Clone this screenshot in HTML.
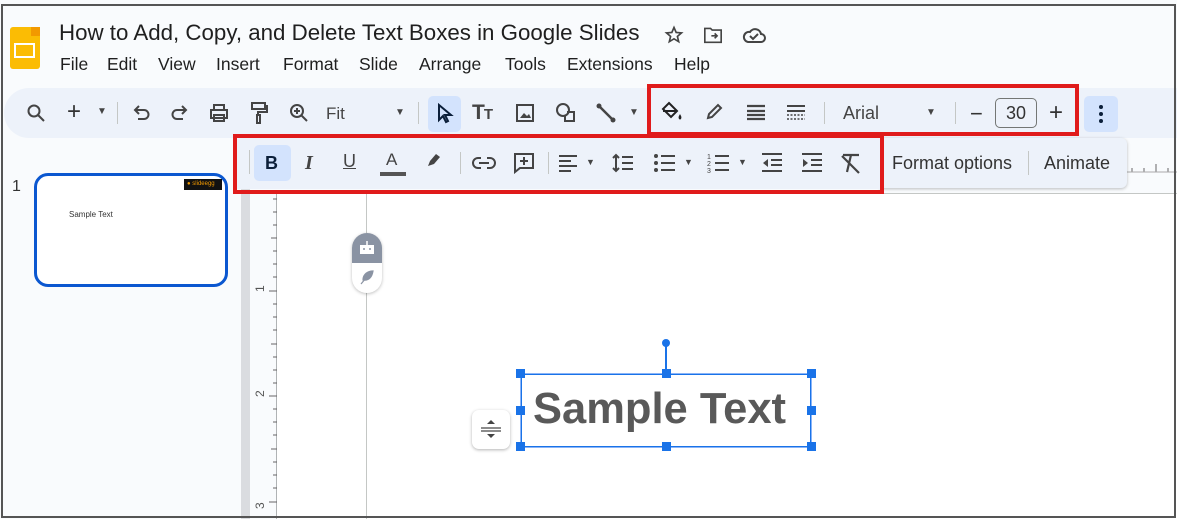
<!DOCTYPE html>
<html><head><meta charset="utf-8"><style>
*{box-sizing:border-box;margin:0;padding:0}
body{width:1177px;height:519px;overflow:hidden;background:#f9fbfd;font-family:"Liberation Sans",sans-serif;position:relative;color:#1f1f1f}
.abs{position:absolute}
.frame{position:absolute;left:1px;top:4px;width:1175px;height:514px;border:2px solid #555;z-index:50;pointer-events:none}
.menu span{position:absolute;top:0;white-space:nowrap}
.red{position:absolute;border:4px solid #e01b1b;z-index:20}
svg{position:absolute}
</style></head><body>
<div class="frame"></div>
<div class="abs" style="left:10px;top:27px;width:30px;height:42px;background:#fbbc04;border-radius:3px"></div>
<div class="abs" style="left:31px;top:27px;width:9px;height:9px;background:#f29900"></div>
<div class="abs" style="left:14px;top:43px;width:21px;height:15px;border:2px solid #fff"></div>
<div class="abs" style="left:59px;top:20px;font-size:22.3px;color:#1f1f1f;white-space:nowrap">How to Add, Copy, and Delete Text Boxes in Google Slides</div>
<svg style="left:664px;top:25px" width="20" height="20" viewBox="0 0 24 24"><path d="M12 3l2.6 6 6.4.5-4.9 4.2 1.5 6.3L12 16.6 6.4 20l1.5-6.3L3 9.5 9.4 9z" fill="none" stroke="#444" stroke-width="2"/></svg>
<svg style="left:703px;top:26px" width="20" height="18" viewBox="0 0 24 22"><path d="M2 3h7l2 2h11v15H2z M10 12h7 M14 9l3 3-3 3" fill="none" stroke="#444" stroke-width="2"/></svg>
<svg style="left:742px;top:25px" width="24" height="20" viewBox="0 0 24 20"><path d="M6 17h13a4 4 0 0 0 0-8 6 6 0 0 0-11-2 5 5 0 0 0-2 10z M8 11l3 3 5-5" fill="none" stroke="#444" stroke-width="2"/></svg>
<div class="abs menu" style="left:0;top:54px;font-size:17.5px"><span style="left:60px">File</span><span style="left:107px">Edit</span><span style="left:158px">View</span><span style="left:216px">Insert</span><span style="left:283px">Format</span><span style="left:359px">Slide</span><span style="left:419px">Arrange</span><span style="left:505px">Tools</span><span style="left:567px">Extensions</span><span style="left:674px">Help</span></div>

<div class="abs" style="left:4px;top:88px;width:1173px;height:50px;background:#edf2fa;border-radius:25px 0 0 25px"></div>
<svg style="left:26px;top:103px" width="20" height="20" viewBox="0 0 20 20"><circle cx="8" cy="8" r="5.5" fill="none" stroke="#444" stroke-width="2"/><path d="M12 12l6 6" stroke="#444" stroke-width="2"/></svg>
<div class="abs" style="left:67px;top:98px;font-size:24px;color:#333">+</div>
<div class="abs" style="left:97px;top:106px;font-size:10px;color:#444">▼</div>
<div class="abs" style="left:117px;top:102px;width:1px;height:22px;background:#c4c7c5"></div>
<svg style="left:131px;top:103px" width="20" height="20" viewBox="0 0 20 20"><path d="M5 7h8a4 4 0 0 1 0 9H7 M8 3L4 7l4 4" fill="none" stroke="#444" stroke-width="2"/></svg>
<svg style="left:170px;top:103px" width="20" height="20" viewBox="0 0 20 20"><path d="M15 7H7a4 4 0 0 0 0 9h6 M12 3l4 4-4 4" fill="none" stroke="#444" stroke-width="2"/></svg>
<svg style="left:208px;top:102px" width="22" height="22" viewBox="0 0 22 22"><path d="M6 3h10v5H6z M3 8h16v8H3z M6 13h10v6H6z" fill="#edf2fa" stroke="#444" stroke-width="2"/></svg>
<svg style="left:249px;top:101px" width="20" height="24" viewBox="0 0 20 24"><path d="M3 2h13v6H3z M16 5h2v6H9v3 M8 14h3v8H8z" fill="none" stroke="#444" stroke-width="2"/></svg>
<svg style="left:288px;top:102px" width="22" height="22" viewBox="0 0 22 22"><circle cx="9" cy="9" r="6" fill="none" stroke="#444" stroke-width="2"/><path d="M13 13l6 6 M6 9h6 M9 6v6" stroke="#444" stroke-width="2"/></svg>
<div class="abs" style="left:326px;top:104px;font-size:17px;color:#444">Fit</div>
<div class="abs" style="left:395px;top:107px;font-size:10px;color:#444">▼</div>
<div class="abs" style="left:418px;top:102px;width:1px;height:22px;background:#c4c7c5"></div>
<div class="abs" style="left:428px;top:96px;width:33px;height:36px;background:#d3e3fd;border-radius:5px"></div>
<svg style="left:436px;top:103px" width="18" height="22" viewBox="0 0 18 22"><path d="M3 2v15l4-4 3 6 2-1-3-6h6z" fill="none" stroke="#0b1f3a" stroke-width="2"/></svg>
<div class="abs" style="left:472px;top:101px;font-size:21px;font-weight:bold;color:#444;letter-spacing:-1px">T<span style="font-size:15px">T</span></div>
<svg style="left:515px;top:103px" width="20" height="20" viewBox="0 0 20 20"><rect x="2" y="2" width="16" height="16" fill="none" stroke="#444" stroke-width="2"/><path d="M5 15l4-5 3 3 2-2 2 4z" fill="#444"/></svg>
<svg style="left:555px;top:102px" width="22" height="22" viewBox="0 0 22 22"><circle cx="8" cy="8" r="6" fill="none" stroke="#444" stroke-width="2"/><path d="M12 10h7v9h-9v-5" fill="none" stroke="#444" stroke-width="2"/></svg>
<svg style="left:596px;top:103px" width="20" height="20" viewBox="0 0 20 20"><path d="M3 3l14 14" stroke="#444" stroke-width="2.5"/><circle cx="3" cy="3" r="2.5" fill="#444"/><circle cx="17" cy="17" r="2.5" fill="#444"/></svg>
<div class="abs" style="left:629px;top:107px;font-size:10px;color:#444">▼</div>

<div class="red" style="left:647px;top:84px;width:432px;height:52px"></div>
<svg style="left:660px;top:101px" width="24" height="22" viewBox="0 0 24 22"><path d="M9 2l8 8-6 6-8-8z M3 10h14" fill="none" stroke="#222" stroke-width="2"/><path d="M20 13c-1 2-2 3-1 5a1.5 1.5 0 0 0 2 0c1-2 0-3-1-5z" fill="#222"/></svg>
<svg style="left:704px;top:102px" width="20" height="20" viewBox="0 0 20 20"><path d="M4 16l1-4L14 3l3 3-9 9z" fill="none" stroke="#444" stroke-width="2"/></svg>
<svg style="left:746px;top:103px" width="20" height="18" viewBox="0 0 20 18"><path d="M1 3h18M1 8h18M1 12h18M1 16h18" stroke="#444" stroke-width="2.2"/></svg>
<svg style="left:786px;top:103px" width="20" height="18" viewBox="0 0 20 18"><path d="M1 3h18M1 8h18" stroke="#444" stroke-width="2"/><path d="M1 12h18M1 16h18" stroke="#444" stroke-width="1.5" stroke-dasharray="2 1.5"/></svg>
<div class="abs" style="left:824px;top:102px;width:1px;height:22px;background:#c4c7c5"></div>
<div class="abs" style="left:843px;top:103px;font-size:18px;color:#444">Arial</div>
<div class="abs" style="left:926px;top:107px;font-size:10px;color:#444">▼</div>
<div class="abs" style="left:955px;top:102px;width:1px;height:22px;background:#c4c7c5"></div>
<div class="abs" style="left:970px;top:101px;font-size:22px;color:#333">−</div>
<div class="abs" style="left:995px;top:98px;width:42px;height:30px;border:1px solid #747775;border-radius:5px;font-size:18px;text-align:center;line-height:28px;color:#333">30</div>
<div class="abs" style="left:1049px;top:99px;font-size:24px;color:#333">+</div>
<div class="abs" style="left:1084px;top:96px;width:34px;height:36px;background:#d3e3fd;border-radius:5px"></div>
<svg style="left:1097px;top:104px" width="8" height="20" viewBox="0 0 8 20"><circle cx="4" cy="3" r="2" fill="#0b1f3a"/><circle cx="4" cy="10" r="2" fill="#0b1f3a"/><circle cx="4" cy="17" r="2" fill="#0b1f3a"/></svg>

<div class="abs" style="left:241px;top:138px;width:9px;height:381px;background:#dadce0"></div>
<div class="abs" style="left:250px;top:138px;width:927px;height:381px;background:#f9fbfd"></div>
<div class="abs" style="left:276px;top:194px;width:901px;height:325px;background:#fff"></div>
<div class="abs" style="left:276px;top:193px;width:901px;height:1px;background:#c4c7c5"></div>
<div class="abs" style="left:276px;top:194px;width:1px;height:325px;background:#b0b3b5"></div>
<div class="abs" style="left:366px;top:194px;width:1px;height:325px;background:#c4c7c5"></div>
<svg style="left:255px;top:194px" width="22" height="325" viewBox="0 0 22 325">
<g stroke="#666" stroke-width="1">
<path d="M18 5h4M18 18h4M18 31h4M16 44h6M18 57h4M18 70h4M18 83h4M14 97h8M18 110h4M18 123h4M18 136h4M16 150h6M18 163h4M18 176h4M18 189h4M14 202h8M18 215h4M18 228h4M18 241h4M16 255h6M18 268h4M18 281h4M18 294h4M14 308h8"/>
</g>
<text x="12" y="101" font-size="12" fill="#555" font-family="Liberation Sans" transform="rotate(-90 9 101)">1</text>
<text x="12" y="206" font-size="12" fill="#555" font-family="Liberation Sans" transform="rotate(-90 9 206)">2</text>
<text x="12" y="318" font-size="12" fill="#555" font-family="Liberation Sans" transform="rotate(-90 9 318)">3</text>
</svg>
<svg style="left:1127px;top:155px" width="50" height="20"><path d="M5 17v-4M17 17v-4M29 17v-8M41 17v-4" stroke="#666"/><path d="M0 17h50" stroke="#aaa"/></svg>

<div class="abs" style="left:880px;top:138px;width:247px;height:50px;background:#edf2fa;border-radius:0 6px 6px 0;box-shadow:0 1px 3px rgba(0,0,0,.25)"></div>
<div class="abs" style="left:892px;top:153px;font-size:18px;color:#333">Format options</div>
<div class="abs" style="left:1028px;top:151px;width:1px;height:24px;background:#c4c7c5"></div>
<div class="abs" style="left:1044px;top:153px;font-size:18px;color:#333">Animate</div>

<div class="abs" style="left:237px;top:138px;width:643px;height:51px;background:#edf2fa"></div>
<div class="red" style="left:233px;top:134px;width:651px;height:60px"></div>
<div class="abs" style="left:249px;top:150px;width:1px;height:24px;background:#c4c7c5"></div>
<div class="abs" style="left:254px;top:145px;width:37px;height:36px;background:#d3e3fd;border-radius:5px"></div>
<div class="abs" style="left:265px;top:153px;font-size:18px;font-weight:bold;color:#0b1f3a">B</div>
<div class="abs" style="left:305px;top:152px;font-size:20px;font-style:italic;font-family:'Liberation Serif',serif;font-weight:bold;color:#444">I</div>
<div class="abs" style="left:343px;top:151px;font-size:18px;color:#444;text-decoration:underline">U</div>
<div class="abs" style="left:386px;top:150px;font-size:17px;color:#444">A</div>
<div class="abs" style="left:380px;top:172px;width:26px;height:4px;background:#555"></div>
<svg style="left:424px;top:151px" width="20" height="20" viewBox="0 0 20 20"><path d="M4 15l2-5 6-7 4 3-6 7z" fill="#444"/></svg>
<div class="abs" style="left:460px;top:152px;width:1px;height:22px;background:#c4c7c5"></div>
<svg style="left:472px;top:153px" width="24" height="20" viewBox="0 0 24 20"><path d="M9 5H6a5 5 0 0 0 0 10h3 M15 5h3a5 5 0 0 1 0 10h-3 M7 10h10" fill="none" stroke="#444" stroke-width="2"/></svg>
<svg style="left:513px;top:152px" width="22" height="22" viewBox="0 0 22 22"><path d="M2 2h18v14H7l-5 4z M11 5v8M7 9h8" fill="none" stroke="#444" stroke-width="2"/></svg>
<div class="abs" style="left:548px;top:152px;width:1px;height:22px;background:#c4c7c5"></div>
<svg style="left:558px;top:154px" width="20" height="18" viewBox="0 0 20 18"><path d="M1 2h18M1 7h12M1 12h18M1 17h12" stroke="#444" stroke-width="2"/></svg>
<div class="abs" style="left:586px;top:157px;font-size:9px;color:#444">▼</div>
<svg style="left:611px;top:152px" width="24" height="22" viewBox="0 0 24 22"><path d="M5 3v16M2 6l3-3 3 3M2 16l3 3 3-3 M11 5h11M11 11h11M11 17h11" fill="none" stroke="#444" stroke-width="2"/></svg>
<svg style="left:653px;top:153px" width="24" height="20" viewBox="0 0 24 20"><circle cx="3" cy="3" r="2" fill="#444"/><circle cx="3" cy="10" r="2" fill="#444"/><circle cx="3" cy="17" r="2" fill="#444"/><path d="M8 3h14M8 10h14M8 17h14" stroke="#444" stroke-width="2"/></svg>
<div class="abs" style="left:684px;top:157px;font-size:9px;color:#444">▼</div>
<svg style="left:707px;top:152px" width="24" height="22" viewBox="0 0 24 22"><text x="0" y="7" font-size="7" fill="#444" font-family="Liberation Sans">1</text><text x="0" y="14" font-size="7" fill="#444" font-family="Liberation Sans">2</text><text x="0" y="21" font-size="7" fill="#444" font-family="Liberation Sans">3</text><path d="M8 4h14M8 11h14M8 18h14" stroke="#444" stroke-width="2"/></svg>
<div class="abs" style="left:738px;top:157px;font-size:9px;color:#444">▼</div>
<svg style="left:761px;top:152px" width="22" height="22" viewBox="0 0 22 22"><path d="M1 2h20M10 8h11M10 13h11M1 19h20" stroke="#444" stroke-width="2"/><path d="M7 7v8l-5-4z" fill="#444"/></svg>
<svg style="left:801px;top:152px" width="22" height="22" viewBox="0 0 22 22"><path d="M1 2h20M10 8h11M10 13h11M1 19h20" stroke="#444" stroke-width="2"/><path d="M2 7v8l5-4z" fill="#444"/></svg>
<svg style="left:840px;top:152px" width="22" height="22" viewBox="0 0 22 22"><path d="M3 3h16M11 3l-4 17M2 4l17 17" stroke="#444" stroke-width="2.2"/></svg>

<div class="abs" style="left:12px;top:178px;font-size:16px;color:#333">1</div>
<div class="abs" style="left:34px;top:173px;width:194px;height:114px;border:3px solid #0b57d0;border-radius:14px;background:#fff"></div>
<div class="abs" style="left:184px;top:179px;width:38px;height:11px;background:#111;font-size:6px;color:#f29900;line-height:11px;padding-left:3px">● slideegg</div>
<div class="abs" style="left:69px;top:210px;font-size:8px;color:#333">Sample Text</div>

<div class="abs" style="left:352px;top:233px;width:30px;height:60px;border-radius:15px;background:#fff;box-shadow:0 1px 3px rgba(0,0,0,.25);overflow:hidden"><div style="height:30px;background:#8a93a3"></div></div>
<svg style="left:357px;top:238px" width="20" height="20" viewBox="0 0 20 20"><rect x="3" y="7" width="14" height="9" fill="#fff"/><path d="M10 3v4" stroke="#fff" stroke-width="1.5"/><circle cx="7" cy="11" r="1" fill="#8a93a3"/><circle cx="13" cy="11" r="1" fill="#8a93a3"/></svg>
<svg style="left:358px;top:268px" width="18" height="18" viewBox="0 0 18 18"><path d="M3 16L8 10M5 12c0-6 5-9 10-9-1 6-4 10-10 9z" fill="#8a93a3" stroke="#8a93a3" stroke-width="1.2"/></svg>

<div class="abs" style="left:665px;top:344px;width:2px;height:29px;background:#1a73e8"></div>
<div class="abs" style="left:662px;top:339px;width:8px;height:8px;border-radius:50%;background:#1a73e8"></div>
<div class="abs" style="left:520px;top:373px;width:292px;height:75px;border:2px solid #8ab4f8;outline:1px solid #1a73e8;outline-offset:-2px"></div>
<div class="abs" style="left:533px;top:385px;font-size:43.5px;font-weight:bold;color:#595959;white-space:nowrap">Sample Text</div>
<div class="abs" style="left:516px;top:369px;width:9px;height:9px;background:#1a73e8"></div>
<div class="abs" style="left:662px;top:369px;width:9px;height:9px;background:#1a73e8"></div>
<div class="abs" style="left:807px;top:369px;width:9px;height:9px;background:#1a73e8"></div>
<div class="abs" style="left:516px;top:406px;width:9px;height:9px;background:#1a73e8"></div>
<div class="abs" style="left:807px;top:406px;width:9px;height:9px;background:#1a73e8"></div>
<div class="abs" style="left:516px;top:442px;width:9px;height:9px;background:#1a73e8"></div>
<div class="abs" style="left:662px;top:442px;width:9px;height:9px;background:#1a73e8"></div>
<div class="abs" style="left:807px;top:442px;width:9px;height:9px;background:#1a73e8"></div>
<div class="abs" style="left:472px;top:410px;width:38px;height:39px;background:#fff;border-radius:7px;box-shadow:0 1px 3px rgba(0,0,0,.3)"></div>
<svg style="left:480px;top:418px" width="22" height="22" viewBox="0 0 22 22"><path d="M7 6l4-4 4 4z M7 16l4 4 4-4z" fill="#444"/><path d="M1 10h20M1 13h20" stroke="#666" stroke-width="1.5"/></svg>
</body></html>
